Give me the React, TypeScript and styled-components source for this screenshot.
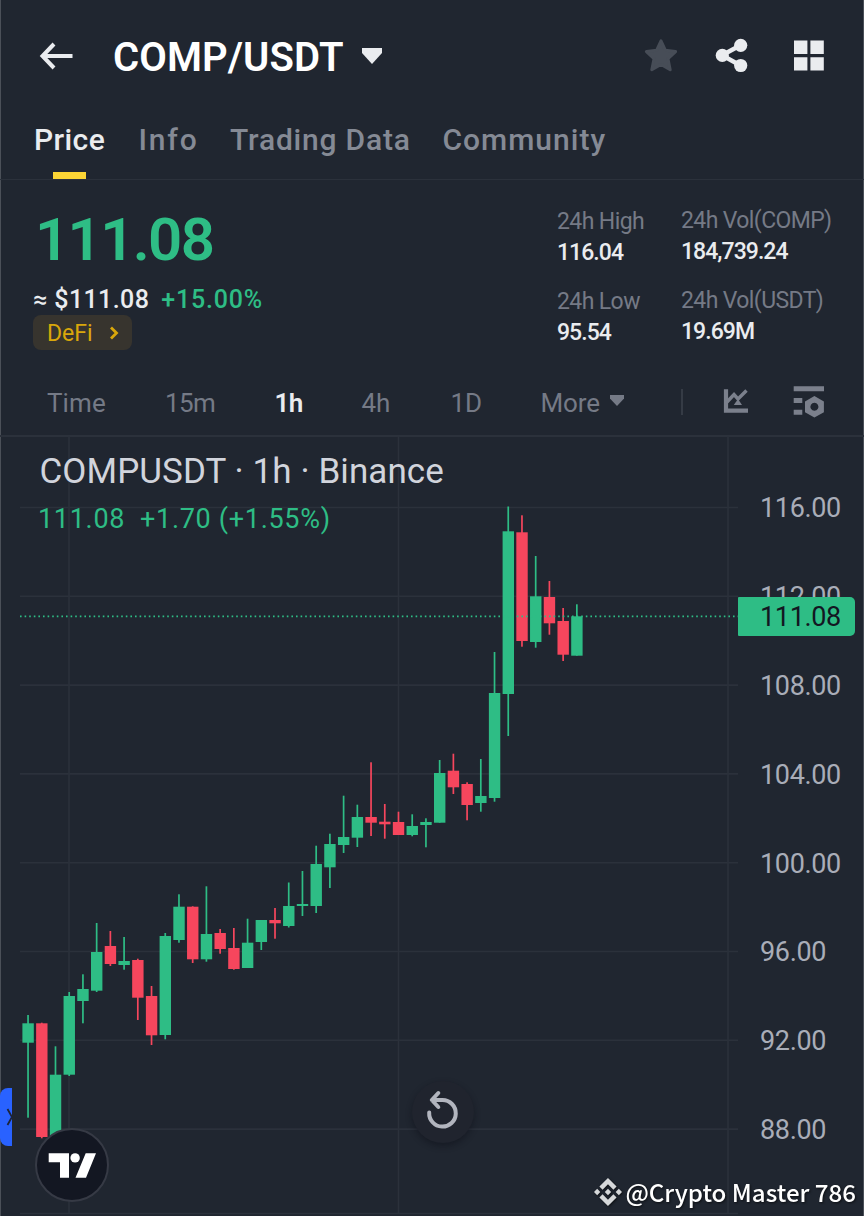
import React from "react";
import styled, { createGlobalStyle } from "styled-components";
import { SiBinance } from "react-icons/si";

const c = {
  bg: "#202630",
  line: "#2b313b",
  edge: "#4b5058",
  bright: "#eaecef",
  muted: "#858a95",
  dim: "#757a86",
  up: "#2ebd85",
  down: "#f6465d",
  gold: "#fcd535",
};

const GlobalStyle = createGlobalStyle`
  * { box-sizing: border-box; }
  body { margin: 0; background: ${c.bg}; font-family: Roboto, "Liberation Sans", sans-serif; }
`;

const Screen = styled.main`
  width: 864px;
  height: 1216px;
  overflow: hidden;
  display: flex;
  flex-direction: column;
  background: ${c.bg};
  box-shadow: inset 1px 0 ${c.edge}, inset -1px 0 ${c.edge};
`;

const Label = styled.span<{ $size: number; $color?: string; $weight?: number; $track?: number; $line?: number }>`
  font-size: ${(p) => p.$size}px;
  font-weight: ${(p) => p.$weight ?? 400};
  color: ${(p) => p.$color ?? c.bright};
  letter-spacing: ${(p) => p.$track ?? 0}px;
  line-height: ${(p) => (p.$line ? `${p.$line}px` : "1.2")};
  white-space: pre;
`;

const Header = styled.header`
  height: 114px;
  flex: none;
  display: flex;
  align-items: center;
  padding: 0 37px 0 38px;
`;

const BackIcon = styled.svg`
  margin-bottom: 3px;
`;

const PairButton = styled.div`
  flex: 1;
  display: flex;
  align-items: center;
  gap: 18px;
  margin-left: 38px;
  padding-top: 2px;

  svg {
    margin-bottom: 4px;
  }
`;

const Actions = styled.div`
  display: flex;
  align-items: center;
  gap: 35px;
  padding-bottom: 2px;
`;

const Tabs = styled.nav`
  height: 66px;
  flex: none;
  display: flex;
  padding-left: 34px;
  border-bottom: 1px solid ${c.line};
`;

const Tab = styled.div<{ $width: number }>`
  width: ${(p) => p.$width}px;
  display: flex;
  flex-direction: column;
`;

const Indicator = styled.div`
  width: 33px;
  height: 7px;
  margin: 6px 0 0 19px;
  background: ${c.gold};
`;

const Ticker = styled.section`
  height: 191px;
  flex: none;
  display: flex;
  padding-left: 33px;
`;

const Quote = styled.div`
  width: 524px;
  padding-top: 30px;
  display: flex;
  flex-direction: column;
  align-items: flex-start;
`;

const BigPrice = styled(Label)`
  margin-left: 2px;
`;

const Converted = styled.div`
  display: flex;
  gap: 12px;
  margin: 15px 0 0;
`;

const Tag = styled.div`
  width: 99px;
  height: 35px;
  display: flex;
  align-items: center;
  justify-content: space-between;
  padding: 0 13px 0 14px;
  border-radius: 8px;
  background: #37342e;
`;

const TagText = styled(Label)`
  padding-top: 2px;
`;

const StatColumn = styled.div<{ $width: number; $top: number }>`
  width: ${(p) => p.$width}px;
  padding-top: ${(p) => p.$top}px;
  display: flex;
  flex-direction: column;
  gap: 18px;
`;

const Stat = styled.div`
  display: flex;
  flex-direction: column;
`;

const Intervals = styled.nav`
  height: 64px;
  flex: none;
  display: flex;
  align-items: center;
  padding-left: 47px;
`;

const Interval = styled.div<{ $width: number }>`
  width: ${(p) => p.$width}px;
  display: flex;
  align-items: center;
  gap: 10px;
  padding-top: 2px;

  svg {
    margin-bottom: 8px;
  }
`;

const Divider = styled.div`
  width: 2px;
  height: 26px;
  margin: 0 40px 3px 0;
  background: #353b45;
`;

const Tools = styled.div`
  display: flex;
  align-items: center;
  gap: 44px;
`;

const Chart = styled.section`
  position: relative;
  flex: 1;
  display: flex;
  box-shadow: inset 0 2px ${c.line};
`;

const Axis = styled.div`
  flex: 1;
  padding: 29.4px 0 0 22px;
  display: flex;
  flex-direction: column;
`;

const Legend = styled.div`
  position: absolute;
  left: 38px;
  top: 10px;
  display: flex;
  flex-direction: column;
`;

const LegendTitle = styled(Label)`
  padding-left: 1.5px;
`;

const PriceBadge = styled.div`
  position: absolute;
  left: 737.5px;
  top: 162px;
  width: 117px;
  height: 39px;
  padding-left: 22.5px;
  border-radius: 1px 5px 5px 1px;
  background: ${c.up};
`;

const SideHandle = styled.div`
  position: absolute;
  left: 0;
  top: 653px;
  width: 12px;
  height: 58px;
  border-radius: 8px 0 0 8px;
  background: #2962ff;
`;

const BrandMark = styled.div`
  position: absolute;
  left: 35px;
  top: 693px;
  width: 74px;
  height: 74px;
  border: 2px solid #363a45;
  border-radius: 50%;
  background: #131722;
`;

const ResetButton = styled.div`
  position: absolute;
  left: 412px;
  top: 646px;
  width: 62px;
  height: 62px;
  border-radius: 50%;
  background: #20242e;
  box-shadow: 0 3px 6px rgba(12, 14, 22, 0.45);
`;

const Signature = styled.div`
  position: absolute;
  right: 8px;
  bottom: 6px;
  display: flex;
  align-items: center;
  gap: 3px;
  color: #d6d8da;
  filter: drop-shadow(1px 1px 1px rgba(0, 0, 0, 0.6));
`;

const SignatureText = styled(Label)`
  font-family: "Noto Sans CJK SC", sans-serif;
`;

type Candle = [up: number, high: number, top: number, bottom: number, low: number];

const candles: Candle[] = [
  [1, 1015, 1023.3, 1042.7, 1117.7],
  [0, 1022.7, 1023.3, 1137, 1138.3],
  [1, 1046.3, 1074.7, 1137, 1137],
  [1, 992, 996, 1074.7, 1076],
  [1, 974.3, 989, 1001, 1023.3],
  [1, 923, 952, 990.7, 992],
  [0, 931, 946, 964, 966],
  [1, 937, 961, 965, 969.7],
  [0, 958.7, 960, 997.7, 1020],
  [0, 986, 996, 1035.3, 1045],
  [1, 933, 936, 1035, 1039.3],
  [1, 894.3, 906.7, 940, 942.7],
  [0, 906.3, 906.7, 959.3, 963],
  [1, 886.3, 934, 959.3, 961.7],
  [0, 929, 933, 949, 953.7],
  [0, 928, 948, 969, 969.7],
  [1, 918.7, 942.7, 968, 968],
  [1, 920, 920, 942, 950],
  [0, 908, 920, 923.3, 938.7],
  [1, 882.5, 906, 926, 927.5],
  [1, 871, 904, 906, 916],
  [1, 845.7, 864, 906, 913],
  [1, 833.7, 844, 867.3, 888],
  [1, 795.7, 837, 845, 853],
  [1, 804.7, 817, 837.7, 847],
  [0, 762.3, 817, 822.7, 836],
  [0, 804, 821.7, 824.3, 838.7],
  [0, 811.7, 822, 835, 835],
  [1, 814.3, 826, 835, 836.3],
  [1, 818.3, 822, 825, 847.3],
  [1, 760, 773, 822.7, 822.7],
  [0, 753.7, 770.7, 787.3, 794],
  [0, 782.3, 784, 805, 820.3],
  [1, 759, 796, 803, 811.7],
  [1, 652, 693, 798, 801.7],
  [1, 506.5, 531.3, 694, 736],
  [0, 515.3, 532.3, 641, 646.7],
  [1, 556, 596.3, 642, 647.7],
  [0, 581, 597, 623.3, 634.7],
  [0, 608, 621, 654.7, 661],
  [1, 604.3, 616.3, 655.7, 655.7],
];

const prices = ["116.00", "112.00", "108.00", "104.00", "100.00", "96.00", "92.00", "88.00"];

const Plot = () => (
  <svg width="738" height="781" viewBox="0 435 738 781">
    <g stroke={c.line} strokeWidth="1.6">
      {prices.map((p, i) => (
        <path key={p} d={`M20 ${507.5 + i * 88.8}H738`} />
      ))}
      <path d="M69 436V1213M398.5 436V1213M728 436V1213M20 1213.5H738" />
    </g>
    {candles.map(([up, high, top, bottom, low], i) => {
      const x = 28.1 + i * 13.72;
      return (
        <g key={i} fill={up ? c.up : c.down}>
          <rect x={x - 0.9} y={high} width="1.7" height={low - high} />
          <rect x={x - 5.7} y={top} width="11.4" height={bottom - top} />
        </g>
      );
    })}
    <path d="M20 616.4H738" stroke={c.up} strokeWidth="1.6" strokeDasharray="1.6 3" />
  </svg>
);

const Caret = ({ w, h, color }: { w: number; h: number; color: string }) => (
  <svg width={w} height={h} viewBox="0 0 20 16" preserveAspectRatio="none" fill={color}>
    <path d="M0 0H20V5L10 16L0 5Z" />
  </svg>
);

const tabs = [
  { name: "Price", width: 104.5, track: 0.4 },
  { name: "Info", width: 91.5, track: 1.8 },
  { name: "Trading Data", width: 212.5, track: 0.8 },
  { name: "Community", width: 200, track: 1 },
];

const intervals = [
  { name: "Time", width: 118, track: 0.1 },
  { name: "15m", width: 109.5, track: -0.6 },
  { name: "1h", width: 87, track: -0.7 },
  { name: "4h", width: 89, track: 0 },
  { name: "1D", width: 90, track: 0 },
];

const stats = [
  { width: 124, top: 26, items: [["24h High", "116.04"], ["24h Low", "95.54"]] },
  { width: 170, top: 25, items: [["24h Vol(COMP)", "184,739.24"], ["24h Vol(USDT)", "19.69M"]] },
];

export default function App() {
  return (
    <Screen>
      <GlobalStyle />
      <Header>
        <BackIcon width="37" height="32" viewBox="38 41 37 32" fill="none" stroke={c.bright} strokeWidth="4">
          <path d="M54 45L42.5 57L54 69M43 57H72.5" />
        </BackIcon>
        <PairButton>
          <Label $size={40} $weight={600} $color="#fff" $track={0.1}>COMP/USDT</Label>
          <Caret w={20} h={16} color={c.bright} />
        </PairButton>
        <Actions>
          <svg width="36" height="36" viewBox="644 38 36 36" fill="#474d57" stroke="#474d57" strokeWidth="3" strokeLinejoin="round">
            <path d="M661 40.8L665.3 50.2L675.6 51.6L668 58.7L670.2 69.8L661 64.4L651.8 69.8L654 58.7L646.4 51.6L656.7 50.2Z" />
          </svg>
          <svg width="34" height="36" viewBox="715 38 34 36" fill={c.bright}>
            <path d="M740.5 45.3L722 55.3L740.5 65.5" fill="none" stroke={c.bright} strokeWidth="4.4" />
            <circle cx="722.3" cy="55.4" r="6.6" />
            <circle cx="740.7" cy="45.3" r="6.6" />
            <circle cx="740.7" cy="65.5" r="6.6" />
          </svg>
          <svg width="43" height="36" viewBox="777 38 43 36" fill={c.bright}>
            <path d="M787 40.6h13.4v13.4h-13.4zM803.4 40.6h13.4v13.4h-13.4zM787 57.2h13.4v13.4h-13.4zM803.4 57.2h13.4v13.4h-13.4z" />
          </svg>
        </Actions>
      </Header>

      <Tabs>
        {tabs.map((t, i) => (
          <Tab key={t.name} $width={t.width}>
            <Label $size={30} $weight={500} $line={52} $track={t.track} $color={i ? c.muted : c.bright}>{t.name}</Label>
            {i === 0 && <Indicator />}
          </Tab>
        ))}
      </Tabs>

      <Ticker>
        <Quote>
          <BigPrice $size={60} $weight={600} $line={60} $color={c.up} $track={-1.7}>111.08</BigPrice>
          <Converted>
            <Label $size={25} $weight={500} $line={30} $track={0.4}>≈ $111.08</Label>
            <Label $size={25} $weight={500} $line={30} $track={0.8} $color={c.up}>+15.00%</Label>
          </Converted>
          <Tag>
            <TagText $size={23} $color="#d9a70b">DeFi</TagText>
            <svg width="10" height="14" viewBox="0 0 10 14" fill="none" stroke="#d9a70b" strokeWidth="2.8">
              <path d="M2 1.5L7.5 7L2 12.5" />
            </svg>
          </Tag>
        </Quote>
        {stats.map((col) => (
          <StatColumn key={col.width} $width={col.width} $top={col.top}>
            {col.items.map(([name, value]) => (
              <Stat key={name}>
                <Label $size={23} $line={31} $track={-0.6} $color={c.dim}>{name}</Label>
                <Label $size={23} $line={31} $track={-0.95} $weight={500}>{value}</Label>
              </Stat>
            ))}
          </StatColumn>
        ))}
      </Ticker>

      <Intervals>
        {intervals.map((t) => (
          <Interval key={t.name} $width={t.width}>
            <Label $size={26} $track={t.track} $weight={t.name === "1h" ? 600 : 400} $color={t.name === "1h" ? c.bright : c.dim}>{t.name}</Label>
          </Interval>
        ))}
        <Interval $width={140.5}>
          <Label $size={26} $color={c.dim} $track={-0.1}>More</Label>
          <Caret w={14} h={11} color={c.dim} />
        </Interval>
        <Divider />
        <Tools>
          <svg width="26" height="32" viewBox="723 387 26 32" fill="none" stroke="#7b808c" strokeWidth="3.4">
            <path d="M726 389.3V410.7H748" strokeWidth="4.2" />
            <path d="M727 402L734 394.5L738 399L746.5 390.5" />
            <path d="M733.8 405H742L738 399Z" fill="#7b808c" stroke="none" />
          </svg>
          <svg width="32" height="34" viewBox="793 386 32 34" fill="#7b808c">
            <path d="M793.7 386.3h30.3v5h-30.3zM793.7 398h8.6v5h-8.6zM793.7 409.8h8.6v5h-8.6z" />
            <path fillRule="evenodd" d="M814.4 396L823.9 401.4V412.2L814.4 417.6L805 412.2V401.4ZM814.4 402.8a4 4 0 1 0 .01 0Z" />
          </svg>
        </Tools>
      </Intervals>

      <Chart>
        <Plot />
        <Axis>
          {prices.map((p) => (
            <Label key={p} $size={27} $line={88.78} $color="#a9adb8" $track={-0.35}>{p}</Label>
          ))}
        </Axis>
        <Legend>
          <LegendTitle $size={35} $line={53} $color="#d1d4dc" $track={0.08}>COMPUSDT · 1h · Binance</LegendTitle>
          <Label $size={27} $line={43} $color={c.up} $track={0.7}>111.08  +1.70 (+1.55%)</Label>
        </Legend>
        <PriceBadge>
          <Label $size={27} $line={40} $color="#131722" $track={-0.35}>111.08</Label>
        </PriceBadge>
        <SideHandle>
          <svg width="12" height="58" viewBox="0 1088 12 58" fill="none" stroke="#1d2438" strokeWidth="1.8">
            <path d="M7.5 1109L12 1117L7.5 1125" />
          </svg>
        </SideHandle>
        <BrandMark>
          <svg width="70" height="70" viewBox="37 1130 70 70" fill="#fff">
            <path d="M48.7 1153.3H69V1177.7H60V1162.3H48.7ZM85.7 1153.3H96L86 1177.7H75.5Z" />
            <circle cx="75.1" cy="1157.9" r="4.7" />
          </svg>
        </BrandMark>
        <ResetButton>
          <svg width="62" height="62" viewBox="412 1081 62 62" fill="none" stroke="#b2b5be" strokeWidth="4" strokeLinecap="round" strokeLinejoin="round">
            <path d="M429.2 1112.5A13.3 13.3 0 1 0 442.5 1100H432M438.3 1093L431.8 1100L438.3 1107" />
          </svg>
        </ResetButton>
        <Signature>
          <SiBinance size={28} />
          <SignatureText $size={24.1} $line={36} $weight={500} $color="#fff">@Crypto Master 786</SignatureText>
        </Signature>
      </Chart>
    </Screen>
  );
}
